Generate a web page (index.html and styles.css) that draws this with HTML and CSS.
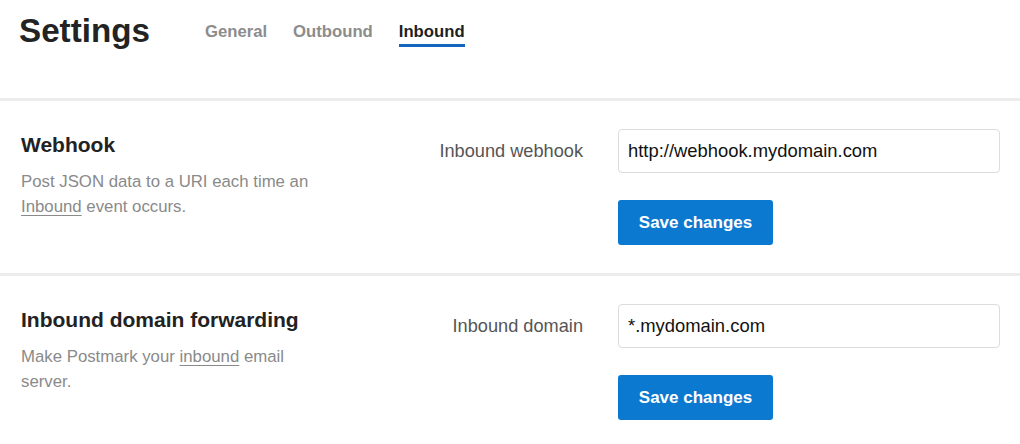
FILE: index.html
```html
<!DOCTYPE html>
<html lang="en">
<head>
<meta charset="utf-8">
<title>Settings</title>
<link rel="stylesheet" href="styles.css">
</head>
<body>
<header class="page-header">
  <h1 class="page-title">Settings</h1>
  <nav class="tabs">
    <a class="tab" href="#">General</a>
    <a class="tab" href="#">Outbound</a>
    <a class="tab tab-active" href="#">Inbound</a>
  </nav>
</header>

<section class="setting">
  <div class="setting-info">
    <h2 class="setting-title">Webhook</h2>
    <p class="setting-desc">Post JSON data to a URI each time an <a class="desc-link" href="#">Inbound</a> event occurs.</p>
  </div>
  <form class="setting-form">
    <label class="field-label" for="webhook">Inbound webhook</label>
    <input class="field-input" id="webhook" type="text" value="http://webhook.mydomain.com">
    <button class="btn-primary" type="button">Save changes</button>
  </form>
</section>

<section class="setting">
  <div class="setting-info">
    <h2 class="setting-title">Inbound domain forwarding</h2>
    <p class="setting-desc">Make Postmark your <a class="desc-link" href="#">inbound</a> email server.</p>
  </div>
  <form class="setting-form">
    <label class="field-label" for="domain">Inbound domain</label>
    <input class="field-input" id="domain" type="text" value="*.mydomain.com">
    <button class="btn-primary" type="button">Save changes</button>
  </form>
</section>
</body>
</html>
```

FILE: styles.css
```css
* {
  box-sizing: border-box;
}

html, body {
  margin: 0;
  padding: 0;
  background: #ffffff;
}

body {
  font-family: "Liberation Sans", Arial, Helvetica, sans-serif;
  color: #222222;
}

.page-header {
  height: 101px;
  padding: 11px 20px 0 19px;
  display: flex;
  align-items: flex-start;
  border-bottom: 3px solid #ececec;
}

.page-title {
  margin: 0;
  font-size: 33.2px;
  line-height: 40px;
  font-weight: 700;
  color: #232323;
}

.tabs {
  display: flex;
  gap: 26px;
  margin-left: 55px;
  margin-top: 11px;
}

.tab {
  display: block;
  font-size: 16.7px;
  line-height: 20px;
  font-weight: 700;
  color: #8c8c8c;
  text-decoration: none;
  padding-bottom: 2px;
  border-bottom: 3px solid transparent;
}

.tab-active {
  color: #1f1f1f;
  border-bottom-color: #1565bf;
}

.setting {
  display: flex;
  padding: 28px 20px 28px 21px;
  border-bottom: 3px solid #ececec;
}

.setting-info {
  width: 330px;
  padding-top: 3px;
}

.setting-title {
  margin: 0;
  font-size: 21px;
  line-height: 25px;
  font-weight: 700;
  color: #222222;
}

.setting-desc {
  margin: 12px 0 0;
  width: 300px;
  font-size: 16.8px;
  line-height: 25px;
  color: #8a8a8a;
}

.desc-link {
  color: #8a8a8a;
  text-decoration: underline;
  text-underline-offset: 3px;
}

.setting-form {
  margin-left: auto;
  display: grid;
  grid-template-columns: auto 382px;
  column-gap: 35px;
  row-gap: 27px;
  align-items: center;
  justify-items: start;
}

.field-label {
  justify-self: end;
  font-size: 18.2px;
  color: #555555;
}

.field-input {
  width: 382px;
  height: 44px;
  padding: 0 9px;
  font-family: "Liberation Sans", Arial, Helvetica, sans-serif;
  font-size: 18.4px;
  color: #111111;
  border: 1.5px solid #dcdcdc;
  border-radius: 4px;
  background: #ffffff;
  outline: none;
}

.btn-primary {
  grid-column: 2;
  height: 45px;
  width: 155px;
  padding: 0;
  font-family: "Liberation Sans", Arial, Helvetica, sans-serif;
  font-size: 17px;
  font-weight: 700;
  color: #ffffff;
  background: #0b79d0;
  border: none;
  border-radius: 3px;
  cursor: pointer;
}
```
